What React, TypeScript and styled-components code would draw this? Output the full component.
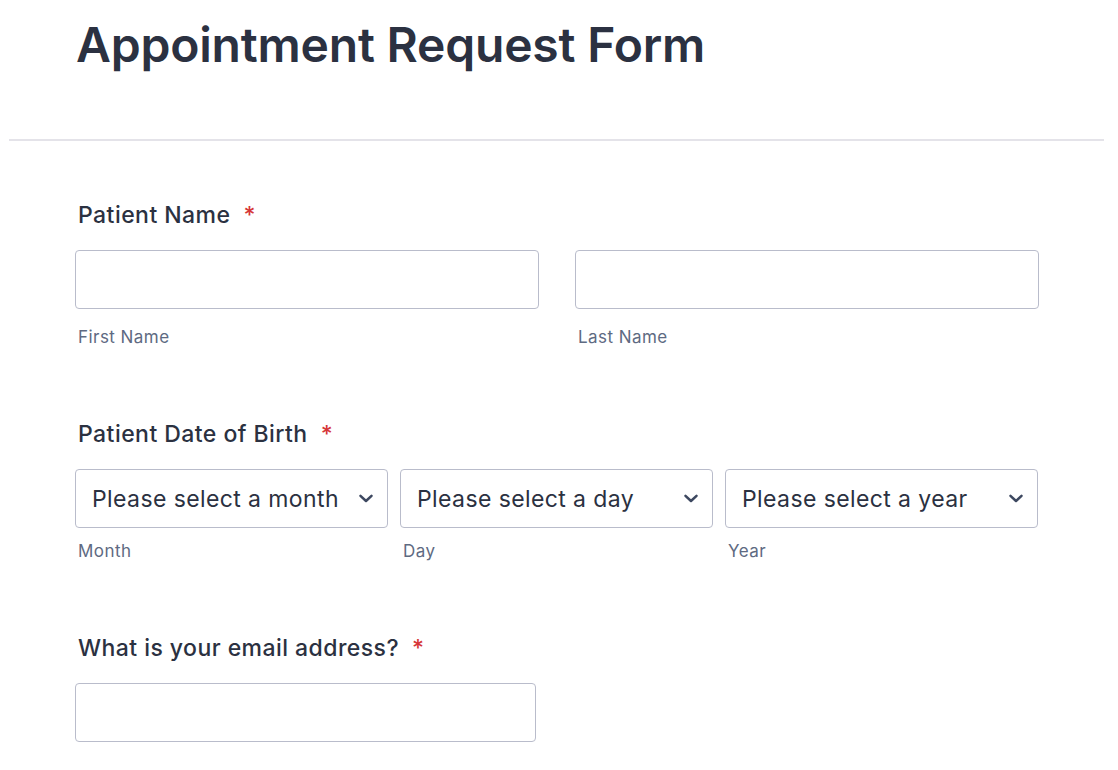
import React from 'react';
import styled, { createGlobalStyle } from 'styled-components';

const GlobalStyle = createGlobalStyle`
    html, body {
        margin: 0;
        padding: 0;
        background: #ffffff;
    }
    body {
        font-family: Inter, 'Noto Sans', 'Liberation Sans', sans-serif;
        color: #2b3141;
    }
    * {
        box-sizing: border-box;
    }
`;

const Page = styled.div`
    width: 1118px;
    padding: 0 14px 0 9px;
`;

const Header = styled.header`
    padding: 16px 0 0 67px;
`;

const Title = styled.h1`
    margin: 0 0 65px;
    font-size: 48px;
    line-height: 58px;
    font-weight: 600;
    color: #2b3141;
    letter-spacing: -0.2px;
`;

const Divider = styled.hr`
    margin: 0;
    border: none;
    height: 2px;
    background: #e4e3e9;
`;

const FormBody = styled.form`
    padding: 60px 65px 0 66px;
`;

const Field = styled.div`
    margin-bottom: 73px;
`;

const Label = styled.div`
    display: flex;
    align-items: baseline;
    margin: 0 0 21px 3px;
    font-size: 23px;
    line-height: 28px;
    font-weight: 500;
    letter-spacing: 0.45px;
    color: #2b3141;
`;

const Required = styled.span`
    margin-left: 13px;
    color: #d63637;
    font-weight: 500;
`;

const Row = styled.div<{ gap: number }>`
    display: flex;
    gap: ${({ gap }) => gap}px;
`;

const Column = styled.div<{ width: number }>`
    width: ${({ width }) => width}px;
    flex: none;
`;

const TextInput = styled.input`
    display: block;
    width: 100%;
    height: 59px;
    padding: 0 16px;
    border: 1px solid #b9bccb;
    border-radius: 4px;
    background: #ffffff;
    font-family: inherit;
    font-size: 23px;
    color: #2b3141;
    outline: none;
`;

const SelectBox = styled.div`
    display: flex;
    align-items: center;
    justify-content: space-between;
    height: 59px;
    padding: 0 14px 0 16px;
    border: 1px solid #b9bccb;
    border-radius: 4px;
    background: #ffffff;
    font-size: 23px;
    letter-spacing: 0.4px;
    color: #2b3141;
    cursor: pointer;
`;

const SubLabel = styled.div<{ spacing: number }>`
    margin: ${({ spacing }) => spacing}px 0 0 3px;
    font-size: 17px;
    line-height: 20px;
    letter-spacing: 0.45px;
    color: #5e6a82;
`;

const Chevron = () => (
    <svg width="14" height="9" viewBox="0 0 14 9" fill="none">
        <polyline
            points="1.5,1.8 7,7 12.5,1.8"
            stroke="#3d4860"
            strokeWidth="2.5"
            strokeLinecap="round"
            strokeLinejoin="round"
        />
    </svg>
);

const Select: React.FunctionComponent<{ placeholder: string; sub: string; width: number }> = ({
    placeholder,
    sub,
    width,
}) => (
    <Column width={width}>
        <SelectBox>
            <span>{placeholder}</span>
            <Chevron />
        </SelectBox>
        <SubLabel spacing={13}>{sub}</SubLabel>
    </Column>
);

const App = () => (
    <Page>
        <GlobalStyle />
        <Header>
            <Title>Appointment Request Form</Title>
        </Header>
        <Divider />
        <FormBody>
            <Field>
                <Label>
                    Patient Name<Required>*</Required>
                </Label>
                <Row gap={36}>
                    <Column width={464}>
                        <TextInput type="text" />
                        <SubLabel spacing={18}>First Name</SubLabel>
                    </Column>
                    <Column width={464}>
                        <TextInput type="text" />
                        <SubLabel spacing={18}>Last Name</SubLabel>
                    </Column>
                </Row>
            </Field>
            <Field>
                <Label>
                    Patient Date of Birth<Required>*</Required>
                </Label>
                <Row gap={12}>
                    <Select placeholder="Please select a month" sub="Month" width={313} />
                    <Select placeholder="Please select a day" sub="Day" width={313} />
                    <Select placeholder="Please select a year" sub="Year" width={313} />
                </Row>
            </Field>
            <Field>
                <Label>
                    What is your email address?<Required>*</Required>
                </Label>
                <Column width={461}>
                    <TextInput type="email" />
                </Column>
            </Field>
        </FormBody>
    </Page>
);

export default App;
